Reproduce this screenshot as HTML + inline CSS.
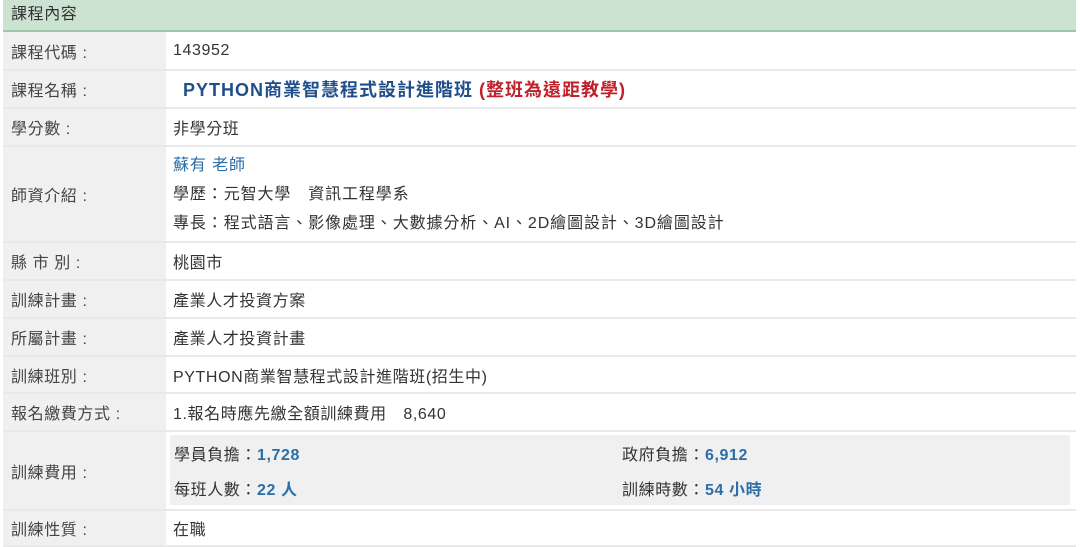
<!DOCTYPE html>
<html><head><meta charset="utf-8"><style>
body{margin:0;background:#fff;font-family:"Liberation Sans","Noto Sans CJK TC",sans-serif;font-size:16px;color:#333;letter-spacing:0.6px;}
.wrap{position:absolute;left:3px;top:0;width:1073px;}
.hd{height:30px;background:#cce3d2;border-bottom:2px solid #9cc7ad;line-height:30px;padding-left:8px;font-size:16px;color:#333;}
table{border-collapse:collapse;width:100%;}
td{border-bottom:2px solid #e9e9e9;padding:0;vertical-align:middle;}
td.l{width:155px;background:#f0f0f0;padding-left:8px;color:#444;}
td.v{padding-left:7px;}
.blue{color:#2b6ea8}
.b{font-weight:bold}
.fee{background:#f0f0f0;margin:2px 6px 3px 0;height:70px;position:relative}
.fee div{position:absolute;line-height:20px}
</style></head><body>
<div class="wrap">
<div class="hd">課程內容</div>
<table>
<tr style="height:38px"><td class="l">課程代碼 :</td><td class="v">143952</td></tr>
<tr style="height:38px"><td class="l">課程名稱 :</td><td class="v" style="font-size:18px;font-weight:bold;padding-left:17px;letter-spacing:1px"><span style="color:#1f4e8c">PYTHON商業智慧程式設計進階班</span> <span style="color:#c0202a">(整班為遠距教學)</span></td></tr>
<tr style="height:38px"><td class="l">學分數 :</td><td class="v">非學分班</td></tr>
<tr style="height:96px"><td class="l">師資介紹 :</td><td class="v" style="line-height:29px;letter-spacing:0.9px"><span class="blue">蘇有 老師</span><br>學歷：元智大學　資訊工程學系<br>專長：程式語言、影像處理、大數據分析、AI、2D繪圖設計、3D繪圖設計</td></tr>
<tr style="height:38px"><td class="l">縣 市 別 :</td><td class="v">桃園市</td></tr>
<tr style="height:38px"><td class="l">訓練計畫 :</td><td class="v">產業人才投資方案</td></tr>
<tr style="height:38px"><td class="l">所屬計畫 :</td><td class="v">產業人才投資計畫</td></tr>
<tr style="height:37px"><td class="l">訓練班別 :</td><td class="v">PYTHON商業智慧程式設計進階班(招生中)</td></tr>
<tr style="height:38px"><td class="l">報名繳費方式 :</td><td class="v">1.報名時應先繳全額訓練費用　8,640</td></tr>
<tr style="height:79px"><td class="l">訓練費用 :</td><td class="v" style="padding-left:4px"><div class="fee">
<div style="left:4px;top:11px">學員負擔：<span class="blue b">1,728</span></div>
<div style="left:452px;top:11px">政府負擔：<span class="blue b">6,912</span></div>
<div style="left:4px;top:46px">每班人數：<span class="blue b">22 人</span></div>
<div style="left:452px;top:46px">訓練時數：<span class="blue b">54 小時</span></div>
</div></td></tr>
<tr style="height:36px"><td class="l">訓練性質 :</td><td class="v">在職</td></tr>
</table>
</div>
</body></html>
